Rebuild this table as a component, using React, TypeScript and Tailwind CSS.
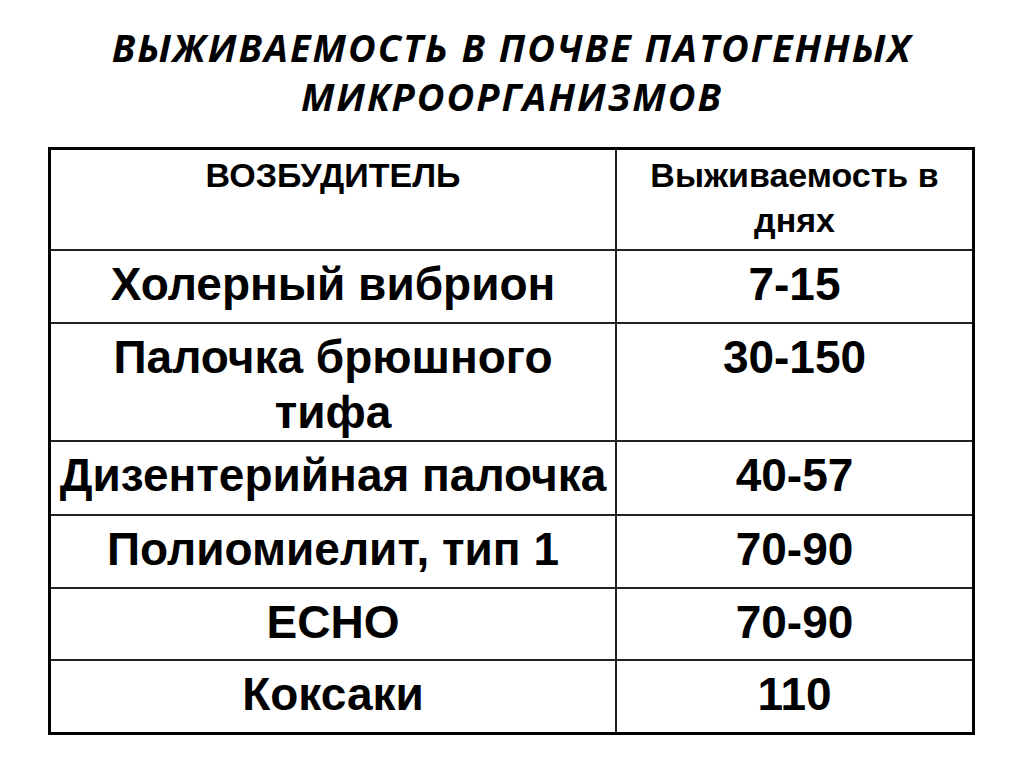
import React from "react";

const rows: { name: string[]; value: string; h: string }[] = [
  { name: ["Холерный вибрион"], value: "7-15", h: "h-[73px]" },
  { name: ["Палочка брюшного", "тифа"], value: "30-150", h: "h-[118px]" },
  { name: ["Дизентерийная палочка"], value: "40-57", h: "h-[74px]" },
  { name: ["Полиомиелит, тип 1"], value: "70-90", h: "h-[73px]" },
  { name: ["ECHO"], value: "70-90", h: "h-[72px]" },
  { name: ["Коксаки"], value: "110", h: "h-[71px]" },
];

export default function App() {
  return (
    <div className="w-[1024px] h-[767px] bg-white overflow-hidden">
      <div
        className="pt-[23px] text-center text-black font-bold italic text-[38px] leading-[49px] tracking-[2px]"
        style={{ fontFamily: "'Open Sans', Lato, sans-serif" }}
      >
        <div>ВЫЖИВАЕМОСТЬ В ПОЧВЕ ПАТОГЕННЫХ</div>
        <div>МИКРООРГАНИЗМОВ</div>
      </div>
      <div
        className="ml-[48px] mt-[26px] w-[927px] border-[3px] border-black text-black font-bold"
        style={{ fontFamily: "'Liberation Sans', Arial, sans-serif" }}
      >
        <div className="flex h-[101px] border-b-2 border-[#222]">
          <div className="w-[566px] border-r-2 border-[#222] text-center text-[34px] leading-[45px] pt-[3px]">
            ВОЗБУДИТЕЛЬ
          </div>
          <div className="flex-1 text-center text-[34px] leading-[45px] pt-[3px]">
            <div>Выживаемость в</div>
            <div>днях</div>
          </div>
        </div>
        {rows.map((r, i) => (
          <div
            key={i}
            className={`flex ${r.h} ${i < rows.length - 1 ? "border-b-2 border-[#222]" : ""}`}
          >
            <div className="w-[566px] border-r-2 border-[#222] text-center text-[46px] leading-[55px] pt-[6px]">
              {r.name.map((n, j) => (
                <div key={j}>{n}</div>
              ))}
            </div>
            <div className="flex-1 text-center text-[46px] leading-[55px] pt-[6px]">
              {r.value}
            </div>
          </div>
        ))}
      </div>
    </div>
  );
}
